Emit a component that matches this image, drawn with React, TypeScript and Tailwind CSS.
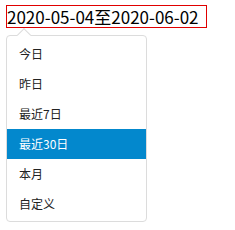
import React from 'react';

const items = ['今日', '昨日', '最近7日', '最近30日', '本月', '自定义'];

export default function App() {
  const active = 3;
  return (
    <div className="w-[235px] h-[230px] bg-white relative" style={{ fontFamily: '"Noto Sans CJK SC", "Noto Sans", sans-serif' }}>
      <div className="absolute left-[6px] top-[5px] w-[201px] h-[23px] border border-[#e00000] text-[17px] leading-[21px] text-black whitespace-nowrap">
        2020-05-04至2020-06-02
      </div>
      <div className="absolute left-[6px] top-[35px] w-[141px] border border-[#dcdcdc] rounded-[4px] bg-white pt-[3px] pb-[2px]">
        <div className="absolute left-[12px] top-[-6px] w-[10px] h-[10px] rotate-45 bg-white border-l border-t border-[#dcdcdc]" />
        {items.map((label, i) => (
          <div
            key={label}
            className={
              'h-[30px] flex items-center pl-3 text-[12px] ' +
              (i === active ? 'bg-[#0388cd] text-white' : 'text-[#222]')
            }
          >
            {label}
          </div>
        ))}
      </div>
    </div>
  );
}
